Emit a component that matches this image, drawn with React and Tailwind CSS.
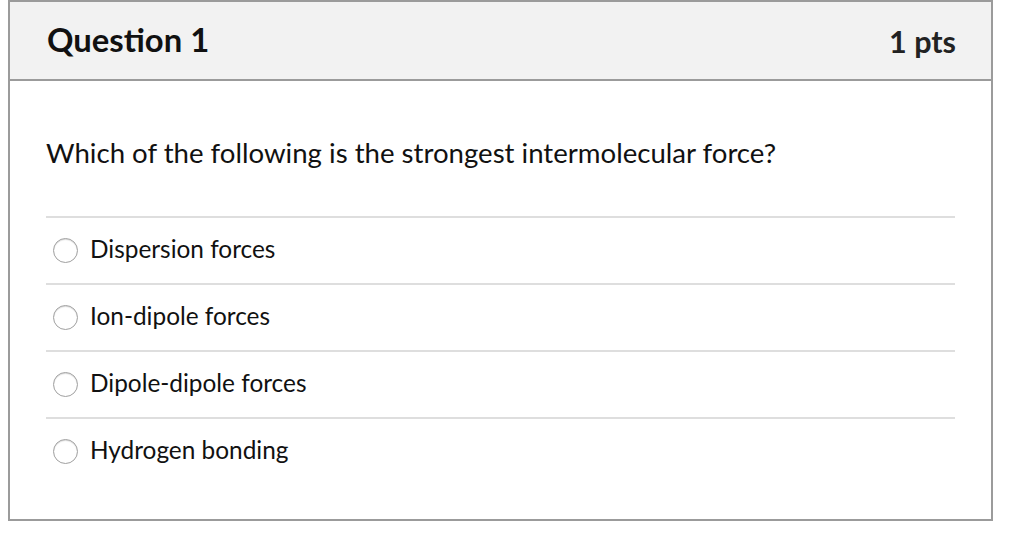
const options = [
  "Dispersion forces",
  "Ion-dipole forces",
  "Dipole-dipole forces",
  "Hydrogen bonding",
];

const App = () => {
  return (
    <div className="w-[1024px] h-[536px] bg-white" style={{ fontFamily: "Lato, 'Noto Sans', sans-serif" }}>
      <div className="ml-[8px] w-[985px] h-[521px] border-2 border-[#9b9b9b] flex flex-col">
        <div className="h-[79px] bg-[#f2f2f2] border-b-2 border-[#9b9b9b] flex items-center justify-between pl-[37px] pr-[35px]">
          <h2 className="text-[32.8px] font-bold text-[#111] pb-[1px]">Question 1</h2>
          <span className="text-[30.5px] font-bold text-[#222] pt-[2px]">1 pts</span>
        </div>
        <div className="px-[36px]">
          <p className="pt-[51px] h-[135px] text-[27.6px] text-[#111]">
            Which of the following is the strongest intermolecular force?
          </p>
          {options.map((opt) => (
            <label
              key={opt}
              className="flex items-center h-[67px] border-t-2 border-[#dedede] text-[24.4px] text-[#111]"
            >
              <span className="w-[25px] h-[25px] ml-[7px] mr-[12px] rounded-full border border-[#a0a0a0] bg-white shadow-[inset_0_1px_1px_rgba(0,0,0,0.15)]" />
              <span className="pb-[3px]">{opt}</span>
            </label>
          ))}
        </div>
      </div>
    </div>
  );
};

export default App;
